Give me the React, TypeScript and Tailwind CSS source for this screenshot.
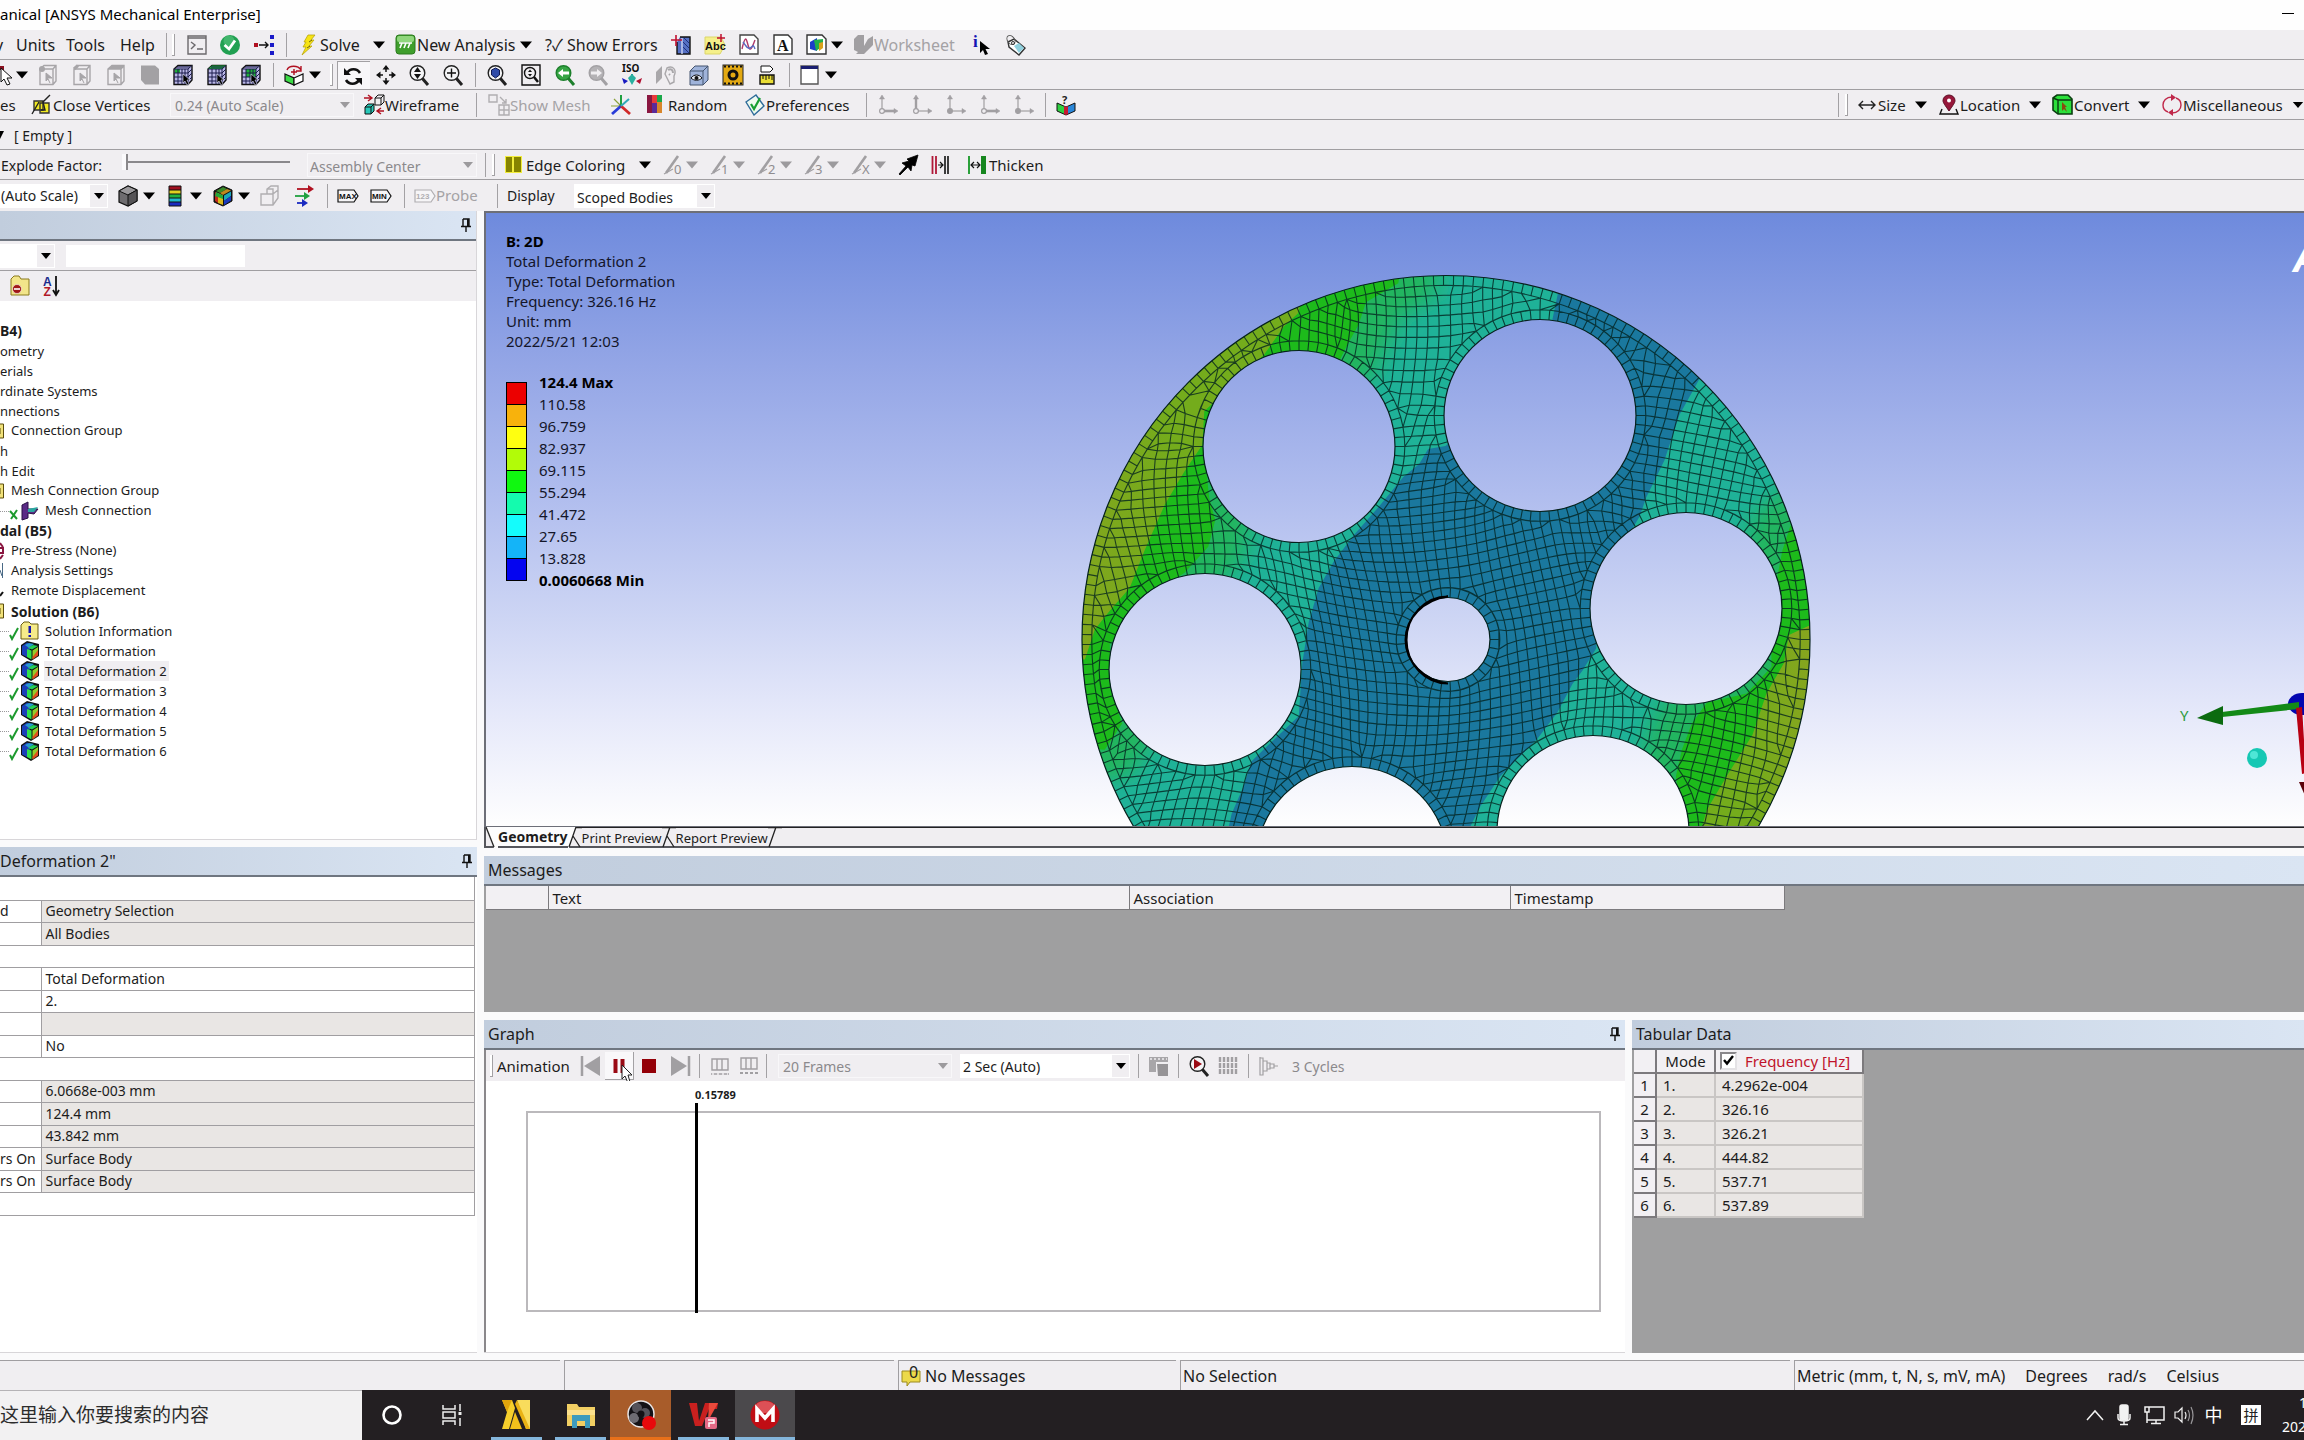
import React, { ReactNode } from "react";

/* ---------- mesh of the perforated wheel ---------- */

type Circle = { x: number; y: number; r: number; out?: boolean };

const RIM: Circle = { x: 1446, y: 640, r: 364, out: true };
const HOLES: Circle[] = [
  { x: 1299, y: 447, r: 96 },
  { x: 1540, y: 416, r: 96 },
  { x: 1686, y: 609, r: 96 },
  { x: 1205, y: 670, r: 96 },
  { x: 1352, y: 863, r: 96 },
  { x: 1593, y: 832, r: 96 },
];
const HUB: Circle = { x: 1448, y: 640, r: 42 };
const CELL = 9.8;

function circlePath(c: Circle) {
  return `M${c.x - c.r} ${c.y}a${c.r} ${c.r} 0 1 0 ${2 * c.r} 0a${c.r} ${c.r} 0 1 0 ${-2 * c.r} 0Z`;
}

function buildMesh() {
  const all = [RIM, ...HOLES, HUB];
  const rings = all.map((c) => {
    const inset = c.out ? c.r - CELL : c.r + CELL;
    return { ...c, inset, n: Math.round((2 * Math.PI * inset) / CELL) };
  });
  const out: string[] = [];
  const p = (n: number) => n.toFixed(1);
  for (const c of rings) {
    out.push(circlePath({ x: c.x, y: c.y, r: c.inset }));
    for (let k = 0; k < c.n; k++) {
      const a = (k / c.n) * 2 * Math.PI;
      out.push(
        `M${p(c.x + c.r * Math.cos(a))} ${p(c.y + c.r * Math.sin(a))}L${p(c.x + c.inset * Math.cos(a))} ${p(c.y + c.inset * Math.sin(a))}`,
      );
    }
  }
  const N = 46;
  const W = 2 * N + 1;
  const xs = new Float64Array(W * W);
  const ys = new Float64Array(W * W);
  const kind = new Int8Array(W * W);
  for (let j = 0; j < W; j++)
    for (let i = 0; i < W; i++) {
      const u = (i - N) * CELL;
      const v = (j - N) * CELL;
      let x = RIM.x + u + 16 * Math.sin(v / 62 + 0.6) + 5 * Math.sin(u / 40);
      let y = RIM.y + v + 16 * Math.sin(u / 66 + 2.2) + 5 * Math.sin(v / 44);
      let best = 1e9;
      let near = rings[0];
      for (const c of rings) {
        const d = Math.hypot(x - c.x, y - c.y);
        const f = c.out ? c.inset - d : d - c.inset;
        if (f < best) {
          best = f;
          near = c;
        }
      }
      const id = j * W + i;
      if (best > CELL * 0.55) kind[id] = 1;
      else if (best > -CELL * 0.65) {
        kind[id] = 2;
        const a = Math.atan2(y - near.y, x - near.x);
        const k = (Math.round((a / (2 * Math.PI)) * near.n) / near.n) * 2 * Math.PI;
        x = near.x + near.inset * Math.cos(k);
        y = near.y + near.inset * Math.sin(k);
      }
      xs[id] = x;
      ys[id] = y;
    }
  for (let t = 0; t < 20; t++)
    for (let id = W; id < W * W - W; id++) {
      if (kind[id] !== 1) continue;
      let sx = 0;
      let sy = 0;
      let n = 0;
      for (const q of [id - 1, id + 1, id - W, id + W])
        if (kind[q]) {
          sx += xs[q];
          sy += ys[q];
          n++;
        }
      if (n) {
        xs[id] = sx / n;
        ys[id] = sy / n;
      }
    }
  for (let id = 0; id < W * W - W; id++)
    for (const q of [id + 1, id + W]) {
      if (!kind[id] || !kind[q]) continue;
      const len = Math.hypot(xs[id] - xs[q], ys[id] - ys[q]);
      if (len > CELL * 2.2 || len < 0.5) continue;
      out.push(`M${p(xs[id])} ${p(ys[id])}L${p(xs[q])} ${p(ys[q])}`);
    }
  return out.join("");
}

const MESH = buildMesh();
const BODY = [RIM, ...HOLES, HUB].map(circlePath).join("");
const GREEN_L =
  "M685 50L680 90L615 140L600 200L575 260L560 300L420 420L290 540L300 660L312 720L298 790L250 860L200 900L100 1050L104 1180L125 1260L90 1330L0 1320L-40 900L0 300L300 100Z";
const GREEN_R =
  "M1500 700L1468 735L1452 800L1430 950L1430 1110L1380 1180L1300 1205L1270 1260L1250 1330L1238 1400L1255 1560L1620 1560L1620 800Z";
const OLIVE_L =
  "M490 120L478 170L450 205L410 280L290 430L286 520L250 590L210 680L170 800L140 900L100 960L70 1010L50 1090L-40 1080L-20 500L300 100Z";
const OLIVE_R = "M1530 985L1465 1025L1455 1100L1420 1180L1392 1290L1340 1400L1300 1490L1285 1560L1640 1560Z";
const BLUE =
  "M1005 90L990 185L960 300L775 522L740 530L722 570L690 605L640 685L590 760L550 830L520 900L500 990L487 1100L480 1240L385 1360L368 1430L345 1500L335 1560L815 1560L845 1480L885 1400L960 1300L1000 1230L1030 1155L1050 1120L1078 1060L1080 900L1165 710L1178 660L1215 560L1245 440L1285 345L1400 250L1100 80Z";

function Wheel() {
  return (
    <svg viewBox="486 212 1818 616" preserveAspectRatio="xMidYMid slice" className="h-full w-full">
      <defs>
        <clipPath id="body">
          <path d={BODY} clipRule="evenodd" />
        </clipPath>
        <filter id="soft" x="-20%" y="-20%" width="140%" height="140%">
          <feGaussianBlur stdDeviation="24" />
        </filter>
        <linearGradient id="edgeL" x1="0" x2="1">
          <stop offset="0.08" stopColor="#84a51e" />
          <stop offset="0.5" stopColor="#74ac1c" />
        </linearGradient>
        <linearGradient id="edgeR" x1="0" x2="1">
          <stop offset="0.3" stopColor="#74ac1c" />
          <stop offset="0.7" stopColor="#8aa41f" />
        </linearGradient>
      </defs>
      <g clipPath="url(#body)">
        <rect x="1070" y="264" width="760" height="760" fill="#1fb298" />
        <g transform="translate(1060 250) scale(.4975 .3762)">
          <g fill="none" stroke="#22b55e" strokeWidth="150" filter="url(#soft)">
            <path d={GREEN_L} />
            <path d={GREEN_R} />
          </g>
          <path d={BLUE} fill="#1a789e" />
          <path d={GREEN_L} fill="#1dbb1b" />
          <path d={GREEN_R} fill="#1dbb1b" />
          <path d={OLIVE_L} fill="url(#edgeL)" />
          <path d={OLIVE_R} fill="url(#edgeR)" />
        </g>
        <path d={MESH} fill="none" stroke="#04231f" strokeOpacity=".8" strokeWidth="1.1" />
      </g>
      <path d={BODY} fill="none" stroke="#06211c" strokeWidth="1.2" />
      <path d="M1448 597A50 44 0 0 0 1448 684A41 43 0 0 1 1448 597Z" fill="#000" stroke="#000" strokeWidth="2" />
    </svg>
  );
}

function Triad() {
  return (
    <svg viewBox="2176 690 128 124" className="absolute right-0 bottom-3.5 h-[124px] w-32">
      <text x="2180" y="723" fontSize="15" fill="#2f9a3c" fontFamily="Noto Sans">
        Y
      </text>
      <ellipse cx="2302" cy="706" rx="14" ry="11" fill="#0306b0" />
      <path d="M2222 714L2299 704L2299 711L2222 719Z" fill="#138a17" />
      <path d="M2197 720L2223 708V727Z" fill="#0b6b10" />
      <path d="M2296 710L2302 709L2306 775L2302 776Z" fill="#b80012" />
      <path d="M2299 784H2306V800Z" fill="#5b0008" />
      <circle cx="2257" cy="760" r="10" fill="#16c8b4" />
      <circle cx="2254" cy="757" r="4" fill="#4fe6d6" />
    </svg>
  );
}

/* ---------- small building blocks ---------- */

function Ic({ children }: { children: ReactNode }) {
  return (
    <svg viewBox="0 0 22 22" className="h-[22px] w-[22px] shrink-0" fill="none" stroke="#111" strokeWidth="1.4">
      {children}
    </svg>
  );
}

function Btn({ w, label, icon, dim, name }: { w: string; label?: string; icon?: ReactNode; dim?: boolean; name?: string }) {
  return (
    <button
      aria-label={label ?? name}
      className={`flex h-full shrink-0 items-center whitespace-nowrap ${w} ${dim ? "text-[#a4a2a5]" : "text-[#1c1c1c]"}`}
    >
      {icon}
      {label}
    </button>
  );
}

function Arrow({ w = "w-3.5", dim }: { w?: string; dim?: boolean }) {
  return (
    <button aria-label="More options" className={`flex h-full shrink-0 items-center ${w}`}>
      <svg viewBox="0 0 14 8" className="h-2 w-3.5">
        <path d="M1 0.5H13L7 7.5Z" fill={dim ? "#9c9a9d" : "#000"} />
      </svg>
    </button>
  );
}

const Sep = ({ w }: { w: string }) => (
  <div className={`flex h-full shrink-0 items-center ${w}`}>
    <div className="h-6 w-px bg-[#a3a1a4]" />
  </div>
);

const Grip = ({ w }: { w: string }) => (
  <div className={`flex h-full shrink-0 items-center ${w}`}>
    <div className="h-[22px] w-[3px] border-r border-b border-[#a3a1a4] bg-white" />
  </div>
);

const Bar = ({ children, size = "text-[15px]" }: { children: ReactNode; size?: string }) => (
  <div className={`flex h-[30px] items-center overflow-hidden border-b border-[#a09ea1] bg-[#f0eef1] pt-px ${size}`}>{children}</div>
);

function Combo({ w, value, dim, name, pad = "pl-1" }: { w: string; value: string; dim?: boolean; name: string; pad?: string }) {
  return (
    <div
      className={`relative flex h-6 shrink-0 items-center border ${w} ${dim ? "border-[#f8f7f9] bg-[#f0eef1]" : "border-white bg-white"}`}
    >
      <select
        aria-label={name}
        disabled={dim}
        className={`h-full w-full appearance-none text-[14px] opacity-100 ${pad} ${dim ? "text-[#8b898c]" : "text-[#1c1c1c]"}`}
      >
        <option>{value}</option>
      </select>
      <div className="pointer-events-none absolute top-0 right-0 flex h-full w-[17px] items-center justify-center bg-[#f0eef1]">
        <svg viewBox="0 0 10 6" className="h-1.5 w-2.5">
          <path d="M0 0H10L5 6Z" fill={dim ? "#9c9a9d" : "#000"} />
        </svg>
      </div>
    </div>
  );
}

const Pin = () => (
  <button aria-label="Pin panel" className="mr-1">
    <svg viewBox="0 0 12 14" className="h-3.5 w-3" fill="none" stroke="#111">
      <path d="M3 1H9V8M3 1V8M1 8.5H11M6 9V14" strokeWidth="1.4" />
      <path d="M8 1V8" strokeWidth="2" />
    </svg>
  </button>
);

function PanelHead({ title, pin, pad = "pl-1" }: { title?: string; pin?: boolean; pad?: string }) {
  return (
    <div className="flex h-[30px] shrink-0 items-center justify-between border-b-2 border-[#6f7680] bg-gradient-to-r from-[#c1cddd] to-[#dae5f3] text-[16px] text-[#1c1c1c]">
      <h2 className={`whitespace-nowrap ${pad}`}>{title}</h2>
      {pin && <Pin />}
    </div>
  );
}

/* ---------- toolbar icons ---------- */

const cubeGrid = (hi: string) => (
  <Ic>
    <path d="M2 5L6 1.5H20V16L16 20.5H2Z" fill="#b9b6e6" stroke="#111" />
    <path d={hi} fill="#1fae3a" stroke="none" />
    <path d="M2 5H16V20.5M16 5L20 1.5M2 9H16M2 13H16M2 17H16M6 5V20M10 5V20M13 5V20M16 9L20 5M16 13L20 9M16 17L20 13M5 3H18" stroke="#1b1b4a" strokeWidth="1" />
    <path d="M11 10V19L13 17L15 21L17 20L15 16H18Z" fill="#000" stroke="#dcdcf5" strokeWidth=".6" />
  </Ic>
);
const cubeDim = (extra: ReactNode) => (
  <Ic>
    <path d="M3 5L7 1.5H19V17L16 20.5H3ZM3 5H16V20.5M16 5L19 1.5" stroke="#a7a5a8" />
    {extra}
    <path d="M9 9V17L11 15L13 19M9 9L15 14H11" stroke="#a7a5a8" fill="#a7a5a8" strokeWidth="1" />
  </Ic>
);
const lens = (inner: ReactNode, ring = "#222", fill = "#f4f4f6") => (
  <Ic>
    <path d="M14 14L20 21" stroke={ring} strokeWidth="3" />
    <circle cx="9.5" cy="9" r="7.3" fill={fill} stroke={ring} />
    {inner}
  </Ic>
);
const axes = (a: boolean, b: boolean, fill: boolean) => (
  <Ic>
    <g stroke="#a19fa2" fill="#a19fa2">
      <path d="M5 17V3" strokeWidth={a ? 2.4 : 1.2} />
      <path d="M5 17H18" strokeWidth={b ? 2.6 : 1.2} />
      <path d="M2.5 5L5 1L7.5 5ZM17 14.5L21 17L17 19.5Z" strokeWidth=".5" />
      <circle cx="5" cy="17" r="2.4" fill={fill ? "#a19fa2" : "#f0eef1"} strokeWidth="1.2" />
    </g>
  </Ic>
);
const edgeIcon = (t: string) => (
  <Ic>
    <path d="M3 19L15 2" stroke="#a19fa2" strokeWidth="2.6" />
    <path d="M1 20L10 15" stroke="#a19fa2" strokeWidth="1.2" />
    <text x="11" y="20" fontSize="13" fill="#8f8d90" stroke="none" fontFamily="Noto Sans">
      {t}
    </text>
  </Ic>
);
const tag = (t: string, c = "#111") => (
  <svg viewBox="0 0 22 16" className="h-4 w-[22px] shrink-0" fill="none" stroke={c}>
    <path d="M1 2H17L21 8L17 14H1Z" strokeWidth="1.2" fill="#f6f5f7" />
    <text x="2" y="11" fontSize="8" fontWeight="700" fill={c} stroke="none" fontFamily="Liberation Sans">
      {t}
    </text>
  </svg>
);
const resultCube = (
  <Ic>
    <path d="M2 5L8 1L20 4V16L12 21L2 15Z" fill="#111" stroke="none" />
    <path d="M3 6L8 2.5L11 4V9L8 17L3 14.5Z" fill="#1b3fb8" stroke="none" />
    <path d="M6 5L10 3L15 4L10 8Z" fill="#2a9ad0" stroke="none" />
    <path d="M8 9L12.500 10.500V19.500L8 17Z" fill="#2fe04a" stroke="none" />
    <path d="M9 8L14 5L19 6L13 9.500Z" fill="#25cf58" stroke="none" />
    <path d="M13.500 10.500L19 7V12L13.500 19Z" fill="#8fce2a" stroke="none" />
    <path d="M19 10V15.500L13.500 19.500V17Z" fill="#e0501c" stroke="none" />
  </Ic>
);
const spectrumCube = (
  <Ic>
    <path d="M2 6L11 1L20 5V16L11 21L2 17Z" fill="#111" stroke="#111" strokeWidth="1" />
    <path d="M3 7L6 8V18L3 16Z" fill="#c02a1c" stroke="none" />
    <path d="M6 8L11 10.500V20L6 18Z" fill="#d8b81c" stroke="none" />
    <path d="M3 11L11 14V10.500L4 7Z" fill="#22a83a" stroke="none" />
    <path d="M4 6L11 2L15 4L8 8Z" fill="#3a8a2a" stroke="none" />
    <path d="M8 8L15 4L19 5.500L11 10Z" fill="#c08a1c" stroke="none" />
    <path d="M12 10.500L19 6.500V11L12 16Z" fill="#1aa8b8" stroke="none" />
    <path d="M12 16L19 11V15.500L12 20Z" fill="#1a3ac0" stroke="none" />
  </Ic>
);

const I = {
  terminal: <Ic><path d="M2 2H20V20H2ZM2 4H20" stroke="#6b696c" /><path d="M5 8L9 11L5 15M11 15H17" stroke="#6b696c" /></Ic>,
  check: <Ic><circle cx="11" cy="11" r="10" fill="#22a052" stroke="none" /><circle cx="10" cy="7" r="5.5" fill="#58c57e" stroke="none" opacity=".6" /><path d="M5.5 11L10 15L16 6.5" stroke="#fff" strokeWidth="2.8" /></Ic>,
  branch: <Ic><path d="M1 9H5V13H1Z" fill="#b01020" stroke="none" /><path d="M6 11H15M12 8L15 11L12 14" /><path d="M17 1H21V5H17ZM17 9H21V13H17ZM17 17H21V21H17Z" fill="#1a1ac8" stroke="none" /></Ic>,
  bolt: <Ic><path d="M10 1H17L13 6H16L11 12H14L4 21L8 13H5L8 8H6Z" fill="#f7e414" stroke="#b9a40c" strokeWidth=".8" /><path d="M14 6L11 8M12 12L9 14" stroke="#6d640c" strokeWidth="1" /></Ic>,
  analysis: <Ic><rect x="1" y="1" width="19" height="19" rx="3" fill="#3f9e2c" stroke="#2c7a1e" strokeWidth="1" /><rect x="2" y="2" width="17" height="6" rx="2" fill="#8fd67c" stroke="none" /><path d="M4 9H17M5 14L7 9M9 14L11 9M13 14L15 9" stroke="#fff" strokeWidth="1.6" /></Ic>,
  section: <Ic><path d="M10 3H20V20H7V8" fill="#5570c4" stroke="#111" /><path d="M12 4V20" stroke="#cdd5f5" /><path d="M13 8L19 14M13 13L19 19M14 4L19 9" stroke="#20307c" strokeWidth="1" /><path d="M1 6H12M6 1V12" stroke="#c01030" strokeWidth="1.6" /></Ic>,
  abc: <Ic><path d="M1 3H17L21 11L16 20H1Z" fill="#f5f08a" stroke="#dcd66a" strokeWidth="1" /><text x="1" y="16" fontSize="11" fontWeight="700" fill="#111" stroke="none" fontFamily="Liberation Sans">Abc</text><path d="M13 4H21M17 0V8" stroke="#c01030" strokeWidth="1.5" /></Ic>,
  chart: <Ic><path d="M2 1H16L20 5V20H2Z" fill="#fff" stroke="#444" /><path d="M4 15C7 2 8 3 10 11S14 14 17 6" stroke="#b03a6a" /><path d="M5 8C8 12 9 15 12 14S15 9 17 15" stroke="#5a6ac0" /></Ic>,
  letter: <Ic><path d="M2 1H16L20 5V20H2Z" fill="#fff" stroke="#333" /><text x="5" y="17" fontSize="16" fontWeight="700" fill="#111" stroke="none" fontFamily="Liberation Serif">A</text></Ic>,
  image: <Ic><path d="M1 1H16L20 5V20H1Z" fill="#fff" stroke="#333" /><path d="M4 8L11 4L11 17L4 15Z" fill="#1d3ec8" stroke="none" /><path d="M8 6L17 5V12L10 17Z" fill="#22b04a" stroke="none" /><path d="M13 9L17 8V14L13 17Z" fill="#d9a01a" stroke="none" /></Ic>,
  sheet: <Ic><path d="M2 5L6 1H12V12L16 5L21 2V11L15 17L12 20H4L6 18L2 16Z" fill="#a19fa2" stroke="none" /></Ic>,
  info: <Ic><text x="1" y="13" fontSize="17" fontWeight="700" fill="#1414b4" stroke="none" fontFamily="Liberation Serif">i</text><path d="M8 7V19L11 16L13 21L16 20L13.500 15H18Z" fill="#000" stroke="none" /></Ic>,
  label: <Ic><path d="M3 8L9 5L20 14L14 21L4 13Z" fill="#fff" stroke="#333" /><path d="M9 12L14 9L19 14L14 19Z" fill="#8fd0de" stroke="none" /><ellipse cx="6" cy="6" rx="3.5" ry="5" transform="rotate(-35 6 6)" stroke="#555" strokeWidth="1" /><circle cx="8" cy="9" r="1.5" stroke="#333" strokeWidth="1" /></Ic>,

  rotate: <Ic><path d="M5 8C8 3 15 3 18 8M17 15C14 20 7 20 4 15" strokeWidth="2.6" /><path d="M2 3V10H9ZM20 20V13H13Z" fill="#111" stroke="none" /></Ic>,
  pan: <Ic><path d="M11 5V8M11 14V17M5 11H8M14 11H17" strokeWidth="1.5" /><path d="M11 1L14.500 5.500H7.500ZM11 21L14.500 16.500H7.500ZM1 11L5.500 7.500V14.500ZM21 11L16.500 7.500V14.500Z" fill="#111" stroke="none" /></Ic>,
  zoomUD: lens(<path d="M9.500 3L13 8H6ZM9.500 15L13 10H6Z" fill="#111" stroke="none" />),
  zoomIn: lens(<path d="M5 9H14M9.500 4.500V13.500" />),
  zoomCube: lens(<path d="M5.500 6L9.500 4L13.500 6V11L9.500 14L5.500 11Z" fill="#2e4aa8" stroke="#101a50" strokeWidth="1" />),
  zoomBox: <Ic><path d="M2 1H20V21H2Z" /><circle cx="10" cy="9" r="5.5" /><path d="M14 13L18 18" strokeWidth="2.5" /><path d="M10 5.500L12 8H8ZM10 12.500L12 10H8Z" fill="#111" stroke="none" /></Ic>,
  zoomPrev: lens(<path d="M4 9L9 5V7.500H15V10.500H9V13Z" fill="#fff" stroke="none" />, "#1d7f2c", "#36a544"),
  zoomNext: lens(<path d="M15 9L10 5V7.500H4V10.500H10V13Z" fill="#f0eef1" stroke="none" />, "#a3a1a4", "#b4b2b5"),
  iso: <Ic><text x="1" y="8" fontSize="10" fontWeight="700" fill="#111" stroke="none" fontFamily="Noto Sans">ISO</text><path d="M11 10V15" stroke="#1a9a9a" strokeWidth="2" /><path d="M7 14L11 10L15 14L11 21Z" fill="#28b0a0" stroke="none" /><path d="M1 14L7 17L3 20Z" fill="#1a1ac0" stroke="none" /><path d="M21 14L15 17L19 20Z" fill="#b01030" stroke="none" /></Ic>,
  heads: <Ic><path d="M1 8L7 2V14L1 20Z" fill="#a9a7aa" stroke="none" /><path d="M12 4C18 1 22 6 19 12V18L15 20L12 14L10 10Z" stroke="#a9a7aa" /><path d="M13 6C16 4 18 6 18 9M14 10L15 11" stroke="#a9a7aa" strokeWidth="2" /></Ic>,
  eyeCube: <Ic><path d="M2 7L7 2H20V16L15 21H2Z" fill="#9fb3da" stroke="#44546e" strokeWidth="1" /><path d="M2 7H15V21M15 7L20 2" stroke="#44546e" strokeWidth="1" /><path d="M3 14C6 10 11 10 14 14C11 17 6 17 3 14Z" fill="#e7edf8" stroke="#111" strokeWidth="1" /><circle cx="8.5" cy="14" r="2" fill="#111" stroke="none" /></Ic>,
  gearFilm: <Ic><rect x="1" y="1" width="20" height="20" fill="#e3a912" stroke="#222" strokeWidth="1" /><path d="M2 2.500H20M2 19.500H20" strokeDasharray="2 2" strokeWidth="2" /><circle cx="11" cy="11" r="4" stroke="#111" strokeWidth="3" /></Ic>,
  ruler: <Ic><path d="M5 2H14L17 5L14 8H5Z" fill="#fff" strokeWidth="1" /><path d="M4 11H18V20H4Z" fill="#e9dd35" /><path d="M7 11V15M10 11V16M13 11V15M16 11V16" strokeWidth="1" /></Ic>,
  win: <Ic><path d="M2 2H19V20H2Z" fill="#fff" stroke="#555" /><path d="M2 3.500H19" stroke="#1b1f70" strokeWidth="3" /></Ic>,
  planeCube: <Ic><path d="M2 10L11 14V21L2 17Z" fill="#3bdb45" stroke="#111" strokeWidth="1.2" /><path d="M11 14L20 10V17L11 21Z" fill="#fff" stroke="#111" strokeWidth="1.2" /><path d="M4 6C6 1 15 1 18 6M18 2V7H13" stroke="#b01020" /><path d="M11 5V11M8 8H14" stroke="#b01020" /></Ic>,
  cursor: <svg viewBox="0 0 14 22" className="h-[22px] w-3.5 shrink-0"><path d="M0 2H4V6H0Z" fill="#8a0f1f" /><path d="M1 4V18L4 15L7 21L10 20L7 14H12Z" fill="#fff" stroke="#111" /></svg>,

  vertices: <Ic><path d="M3 7H12V16H3ZM9 9H18V19H9Z" fill="#f1ea22" stroke="#333" /><path d="M1 20L8 8M10 16H14L12 8L19 1" stroke="#222" /></Ic>,
  wire: <Ic><path d="M1 4H8M5 1L9 4L5 7" stroke="#b01020" /><path d="M12 4L15 1H21V8L18 11H12ZM12 4H18V11M18 4L21 1" strokeWidth="1" /><path d="M2 13L5 10H11V17L8 20H2Z" fill="#27c8b8" strokeWidth="1" /><path d="M2 13H8V20M8 13L11 10" strokeWidth="1" /><path d="M21 17H15M18 14L14 17L18 20" stroke="#b01020" /></Ic>,
  showMesh: <Ic><path d="M1 1H9V8H1ZM12 3L18 9M18 5V9H14M11 11H21V21H11ZM11 16H21M16 11V21" stroke="#b0aeb1" /></Ic>,
  star: <Ic><path d="M11 12L4 5M11 12H1" stroke="#8aa03a" strokeWidth="1.2" /><path d="M11 12V1" stroke="#20a040" strokeWidth="2" /><path d="M11 12L2 20" stroke="#2a3cd8" strokeWidth="2.8" /><path d="M11 12L20 20" stroke="#d02828" strokeWidth="2.8" /><path d="M11 12L19 5" stroke="#30a8b8" strokeWidth="2" /></Ic>,
  random: <Ic><path d="M1 1H6V19H1Z" fill="#8a1640" stroke="none" /><path d="M6 1H11V9H6Z" fill="#e83a3a" stroke="none" /><path d="M11 1H16V8H11Z" fill="#1aa84a" stroke="none" /><path d="M6 9H11V19H6Z" fill="#5a2a9a" stroke="none" /><path d="M11 8H16V19H11Z" fill="#d9862a" stroke="none" /></Ic>,
  prefs: <Ic><path d="M2 8L12 1L20 12L10 21Z" fill="#eefaf0" stroke="#2e6c9a" /><path d="M7 10L10 15L16 4" stroke="#16a032" strokeWidth="2.2" /></Ic>,
  help: <Ic><path d="M2 9L11 13V21L2 17Z" fill="#2ed040" strokeWidth="1" /><path d="M20 9L11 13V21L20 17Z" fill="#2a86d8" strokeWidth="1" /><path d="M9 12L11 13L13 12V20L11 21L9 20Z" fill="#c81830" stroke="none" /><text x="7" y="10" fontSize="11" fontWeight="700" fill="#222" stroke="none" fontFamily="Noto Sans">?</text></Ic>,
  size: <Ic><path d="M3 11H19M7 7L3 11L7 15M15 7L19 11L15 15" stroke="#222" /></Ic>,
  loc: <Ic><path d="M11 17C7 11 5 9 5 6.500A6 5.500 0 0 1 17 6.500C17 9 15 11 11 17Z" fill="#96163a" stroke="#5a0c22" strokeWidth="1" /><circle cx="11" cy="6.500" r="2" fill="#fff" stroke="none" /><path d="M4 15L2 20H20L18 15" /></Ic>,
  convert: <Ic><path d="M1 4L5 1H16L20 5V20H6L1 16Z" fill="#2be03a" stroke="#0b3d10" strokeWidth="1.6" /><path d="M6 6H20M6 6V20M1 4L6 6" stroke="#0b3d10" /><path d="M10 8V17L12 15L15 18L13 13H15Z" fill="#8a4a10" stroke="none" /></Ic>,
  misc: <Ic><path d="M11 3C5 3 2 7 2 11S4 17 7 18M11 19C17 19 20 15 20 11S18 5 15 4" stroke="#c0284a" /><path d="M10 0V7L15 3.500ZM12 15V22L7 18.500Z" fill="#c0284a" stroke="none" /></Ic>,

  edgeColor: <svg viewBox="0 0 22 22" className="h-[22px] w-[22px] shrink-0"><path d="M1 2H18V19H1Z" fill="#f1ec3c" /><path d="M2 3H8V18H2ZM10 3H17V18H10Z" fill="#868400" /></svg>,
  pinArrow: <Ic><path d="M20 1L17 12L14 11L13 17L10 13L2 21L1 20L8 12L4 9L11 7L9 5Z" fill="#000" stroke="#000" strokeWidth=".8" /></Ic>,
  parallel: <Ic><path d="M2.500 2V20M6 2V20" stroke="#b01838" strokeWidth="1.8" /><path d="M15 2V20M18 2V20" strokeWidth="1.6" /><path d="M8 11H13M10 8L13 11L10 14" strokeWidth="1.2" /></Ic>,
  thicken: <Ic><path d="M2 2V20" stroke="#2ba03a" strokeWidth="2" /><path d="M4 11H13M7 8L4 11L7 14M10 8L13 11L10 14" strokeWidth="1.2" /><path d="M14 2H19V20H14Z" fill="#17861f" stroke="none" /></Ic>,

  grayCube: <Ic><path d="M2 6L11 1L20 5V16L11 21L2 17Z" fill="#6e6c6f" strokeWidth="1.2" /><path d="M2 6L11 1L20 5L11 10Z" fill="#9a989b" strokeWidth="1" /><path d="M11 10L20 5V16L11 21Z" fill="#555356" strokeWidth="1" /></Ic>,
  legend: <Ic><path d="M5 1H17V5H5Z" fill="#a01020" stroke="none" /><path d="M5 5H17V9H5Z" fill="#e0d020" stroke="none" /><path d="M5 9H17V13H5Z" fill="#20b040" stroke="none" /><path d="M5 13H17V17H5Z" fill="#20b8d0" stroke="none" /><path d="M5 17H17V21H5Z" fill="#1a2ac0" stroke="none" /><path d="M5 1H17V21H5ZM5 5H17M5 9H17M5 13H17M5 17H17" strokeWidth="1" /></Ic>,
  ghost: <Ic><path d="M2 9H8V4L12 1H19V13L14 20H2ZM8 9H14V20M14 9L19 5M8 4H14V9" stroke="#b0aeb1" /></Ic>,
  flows: <Ic><path d="M4 4H16" stroke="#b01020" strokeWidth="1.8" /><path d="M15 0L21 4L15 8Z" fill="#b01020" stroke="none" /><path d="M2 11H12" stroke="#20a040" strokeWidth="1.8" /><path d="M11 7L17 11L11 15Z" fill="#20a040" stroke="none" /><path d="M4 18H10" stroke="#1a2ac0" strokeWidth="1.8" /><path d="M9 14L15 18L9 22Z" fill="#1a2ac0" stroke="none" /></Ic>,
  folderNo: <Ic><path d="M2 4L5 1H10L12 4H20V20H2Z" fill="#f2e58a" stroke="#8a7a1c" strokeWidth="1" /><circle cx="8" cy="14" r="4.5" fill="#a01818" stroke="#fff" strokeWidth=".6" /><path d="M5 14H11" stroke="#fff" strokeWidth="1.6" /></Ic>,
  az: <Ic><text x="1" y="11" fontSize="12" fontWeight="700" fill="#1b2b8c" stroke="none" fontFamily="Liberation Sans">A</text><text x="1.5" y="21" fontSize="12" fontWeight="700" fill="#b01828" stroke="none" fontFamily="Liberation Sans">Z</text><path d="M14 1V18M11 15L14 20L17 15" strokeWidth="1.8" /></Ic>,

  first: <Ic><path d="M2 1V21" stroke="#a19fa2" strokeWidth="2.5" /><path d="M20 1V21L4 11Z" fill="#a19fa2" stroke="none" /></Ic>,
  last: <Ic><path d="M20 1V21" stroke="#a19fa2" strokeWidth="2.5" /><path d="M2 1V21L18 11Z" fill="#a19fa2" stroke="none" /></Ic>,
  pause: <Ic><path d="M5.500 4H9.500V18H5.500ZM12.500 4H16.500V18H12.500Z" fill="#9a0a14" stroke="none" /></Ic>,
  stop: <Ic><path d="M4 4H18V18H4Z" fill="#940008" stroke="none" /></Ic>,
  frames: <Ic><path d="M3 4H19V15H3ZM8 4V15M13 4V15M2 19H20" stroke="#a19fa2" /><path d="M3 19H19" stroke="#f0eef1" strokeDasharray="2 3" /></Ic>,
  frames2: <Ic><path d="M3 3H19V14H3ZM8 3V14M13 3V14" stroke="#a19fa2" /><path d="M2 18H20" stroke="#a19fa2" strokeDasharray="3 2" strokeWidth="2" /></Ic>,
  exportV: <Ic><path d="M1 2H20V7H8V17H1Z" fill="#a8a6a9" stroke="none" /><path d="M9 9H20V21H10Z" fill="#969497" stroke="none" /><path d="M2 4H19" stroke="#f0eef1" strokeDasharray="2 2" /></Ic>,
  zoomPlay: lens(<path d="M6 4L14 9L6 14Z" fill="#9a0a14" stroke="none" />),
  tableDots: <Ic><path d="M2 2V20M6 2V20M10 2V20M14 2V20M18 2V20" stroke="#a19fa2" strokeWidth="2.4" strokeDasharray="5 1" /></Ic>,
  cycles: <Ic><path d="M2 2V20H5V3H2M5 16H9V6H5M9 14H12V8H9M12 13H16V9H12M16 11H20" stroke="#a19fa2" strokeWidth="1.2" /></Ic>,
};

/* ---------- data ---------- */

const TREE_TOP = ["B4)", "ometry", "erials", "rdinate Systems", "nnections"];
const LEGEND = [
  ["124.4 Max", "bg-[#ec0000]"],
  ["110.58", "bg-[#f8b20c]"],
  ["96.759", "bg-[#ffff10]"],
  ["82.937", "bg-[#b2fb08]"],
  ["69.115", "bg-[#10f810]"],
  ["55.294", "bg-[#14fbae]"],
  ["41.472", "bg-[#14fcfc]"],
  ["27.65", "bg-[#14b4f8]"],
  ["13.828", "bg-[#0404f0]"],
  ["0.0060668 Min", ""],
];
const DETAILS: ([string, string, boolean] | null)[] = [
  null,
  ["d", "Geometry Selection", true],
  ["", "All Bodies", true],
  null,
  ["", "Total Deformation", false],
  ["", "2.", false],
  ["", "", true],
  ["", "No", false],
  null,
  ["", "6.0668e-003 mm", true],
  ["", "124.4 mm", true],
  ["", "43.842 mm", true],
  ["rs On", "Surface Body", true],
  ["rs On", "Surface Body", true],
  null,
];
const MODES = ["4.2962e-004", "326.16", "326.21", "444.82", "537.71", "537.89"];

/* ---------- left side ---------- */

const Tick = () => (
  <svg viewBox="0 0 10 16" className="h-4 w-2.5 shrink-0 self-end" fill="none" stroke="#1d9a2e" strokeWidth="2">
    <path d="M1 10L3 14L9 3" />
  </svg>
);

function Leaf({ text, icon, on }: { text: string; icon: ReactNode; on?: boolean }) {
  return (
    <li className="flex h-5 items-center">
      <span className="w-[9px] border-t border-dotted border-[#9a989b]" />
      <Tick />
      {icon}
      <span className={`ml-[3px] pr-0.5 pl-px leading-5 ${on ? "bg-[#f0eef1]" : ""}`}>{text}</span>
    </li>
  );
}

function Node({ text, bold, icon }: { text: string; bold?: boolean; icon: ReactNode }) {
  return (
    <li className={`flex h-5 items-center gap-[7px] ${bold ? "text-[14px] font-bold" : ""}`}>
      <svg viewBox="0 0 4 18" className="h-[18px] w-1 shrink-0" fill="none">
        {icon}
      </svg>
      {text}
    </li>
  );
}

const groupMark = <path d="M-8 2H3.500V16H-8M0 6V12H-4V6Z" fill="#f1e27a" stroke="#5b4c0c" />;

function Outline() {
  return (
    <section className="flex min-h-0 flex-1 flex-col border-r border-b border-[#d8d6d9] bg-white">
      <PanelHead pin />
      <div className="flex h-[30px] shrink-0 items-center border-b border-[#a09ea1] bg-[#f0eef1]">
        <Combo w="w-[55px]" value=" " name="Filter field" />
        <input aria-label="Filter text" className="ml-[11px] h-[22px] w-[179px] bg-white text-[14px] outline-none" />
      </div>
      <div className="flex h-[30px] shrink-0 items-center bg-[#f0eef1] pl-[9px]">
        <Btn w="w-[33px]" name="Hide folders" icon={I.folderNo} />
        <Btn w="w-[33px]" name="Sort" icon={I.az} />
      </div>
      <ul className="overflow-hidden pt-5 text-[13px] whitespace-nowrap text-[#1c1c1c]">
        {TREE_TOP.map((t, i) => (
          <li key={t} className={`h-5 leading-5 ${i === 0 ? "text-[14px] font-bold" : ""}`}>
            {t}
          </li>
        ))}
        <Node text="Connection Group" icon={groupMark} />
        <li className="h-5 leading-5">h</li>
        <li className="h-5 leading-5">h Edit</li>
        <Node text="Mesh Connection Group" icon={groupMark} />
        <li className="flex h-5 items-center">
          <span className="w-[9px] border-t border-dotted border-[#9a989b]" />
          <svg viewBox="0 0 32 20" className="h-5 w-8 shrink-0" fill="none">
            <path d="M1 10L8 18M8 9L2 18" stroke="#1d9a2e" strokeWidth="2" />
            <path d="M13 4L19 1V8H29L25 13L19 12V17L13 19Z" fill="#5b2a86" stroke="#2b1145" />
            <path d="M19 8L29 6L25 11H19Z" fill="#2aa7a0" />
          </svg>
          <span className="ml-1">Mesh Connection</span>
        </li>
        <li className="h-5 text-[14px] leading-5 font-bold">dal (B5)</li>
        <Node text="Pre-Stress (None)" icon={<path d="M0 1L3 5M0 6H3V11H0M0 17L3 13" stroke="#8a1640" strokeWidth="2" />} />
        <Node text="Analysis Settings" icon={<path d="M2.500 1V16M0 8L2 14" stroke="#4a6a86" />} />
        <Node text="Remote Displacement" icon={<path d="M0 14L3 10" stroke="#111" strokeWidth="2" />} />
        <Node text="Solution (B6)" bold icon={groupMark} />
        <Leaf
          text="Solution Information"
          icon={
            <svg viewBox="0 0 22 20" className="h-5 w-[22px] shrink-0">
              <path d="M2 4L5 1H10L12 3H19V18H2Z" fill="#f6eb8a" stroke="#6b5c10" />
              <path d="M9.500 5H12V12H9.500ZM9.500 14H12V16H9.500Z" fill="#1616b0" />
            </svg>
          }
        />
        {["", " 2", " 3", " 4", " 5", " 6"].map((n) => (
          <Leaf key={n} text={`Total Deformation${n}`} on={n === " 2"} icon={resultCube} />
        ))}
      </ul>
    </section>
  );
}

function Details() {
  return (
    <section className="flex h-[506px] shrink-0 flex-col border-b border-[#d8d6d9] bg-white">
      <PanelHead title={'Deformation 2"'} pin pad="pl-0" />
      <table className="mr-0.5 table-fixed border-collapse text-[14px] leading-4 text-[#1c1c1c]">
        <colgroup>
          <col className="w-[41px]" />
          <col />
        </colgroup>
        <tbody>
          {DETAILS.map((r, i) => (
            <tr key={i} className={i % 2 ? "h-[22px]" : "h-[23px]"}>
              {r ? (
                <>
                  <td className="border-r border-b border-[#a09ea1] p-0 whitespace-nowrap">{r[0]}</td>
                  <td className={`border-r border-b border-[#a09ea1] py-0 pl-1 ${r[2] ? "bg-[#e9e6e4]" : ""}`}>{r[1]}</td>
                </>
              ) : (
                <td colSpan={2} className="border-r border-b border-[#a09ea1] p-0" />
              )}
            </tr>
          ))}
        </tbody>
      </table>
    </section>
  );
}

/* ---------- right side ---------- */

function Viewport() {
  return (
    <section className="relative min-h-0 flex-1 overflow-hidden border-t-2 border-b border-l-2 border-[#6d6f78] bg-[linear-gradient(#6e8add,#94a6e6_25%,#b0bdee_46%,#cdd5f4_66%,#e6e9fa_82%,#fefefe)] font-['Noto_Sans']">
      <div className="absolute inset-0">
        <Wheel />
      </div>
      <div className="relative pt-[18px] pl-5 text-[15px] leading-5 text-[#14162a]">
        <p className="font-bold text-black">B: 2D</p>
        <p>Total Deformation 2</p>
        <p>Type: Total Deformation</p>
        <p>Frequency: 326.16 Hz</p>
        <p>Unit: mm</p>
        <p>2022/5/21 12:03</p>
      </div>
      <ul className="relative mt-5 ml-5 w-60 text-[15px] text-[#14162a]">
        {LEGEND.map(([t, c], i) => (
          <li key={t} className="flex h-[22px]">
            <span className={`h-[23px] w-[21px] shrink-0 ${c ? `border border-black ${c} translate-y-[11px]` : ""}`} />
            <span className={`ml-3 leading-[22px] ${i === 0 || i === 9 ? "font-bold text-black" : ""}`}>{t}</span>
          </li>
        ))}
      </ul>
      <span className="absolute top-6 left-full -ml-2.5 text-[40px] leading-10 font-bold text-white italic">A</span>
      <Triad />
    </section>
  );
}

const Slant = ({ d, fill }: { d: string; fill?: string }) => (
  <svg viewBox="0 0 14 21" className="h-[21px] w-3.5 shrink-0" fill="none" stroke="#222" strokeWidth="1.3">
    {fill && <path d={fill} fill="#fdfdfd" stroke="none" />}
    <path d={d} />
  </svg>
);

function Tabs() {
  return (
    <nav className="flex h-[21px] shrink-0 border-b-2 border-l-2 border-[#55565c] bg-[#f0eef1] text-[13px] leading-5 whitespace-nowrap text-[#1c1c1c]">
      <svg viewBox="0 0 12 21" className="h-[21px] w-3 shrink-0" stroke="#222" strokeWidth="1.3">
        <path d="M0 0H12V21H8Z" fill="#fdfdfd" stroke="none" />
        <path d="M0 0L8 20" />
      </svg>
      <button className="bg-[#fdfdfd] text-[14px] font-bold">Geometry</button>
      <Slant d="M1 20L8 0M5 9L12 20M8 0.500H14" fill="M0 0H8L1 21H0Z" />
      <button className="border-t border-[#222]">Print Preview</button>
      <Slant d="M0 .5H8M1 20L8 0M5 9L12 20M8 0.500H14" />
      <button className="border-t border-[#222]">Report Preview</button>
      <Slant d="M0 .5H8M1 20L8 0M8 .5H14" />
      <div className="flex-1 border-t border-[#222]" />
    </nav>
  );
}

function Messages() {
  const th = "border-r border-b border-[#7c7a7d] pl-1 text-left font-normal";
  return (
    <section className="mt-2 flex h-[156px] shrink-0 flex-col bg-[#9f9fa0]">
      <PanelHead title="Messages" />
      <table className="ml-0.5 h-6 w-[1299px] table-fixed border-collapse bg-[#f2f0f3] text-[15px] leading-5 text-[#1c1c1c]">
        <thead>
          <tr>
            <th className={`w-[62px] ${th}`} />
            <th className={`w-[581px] ${th}`}>Text</th>
            <th className={`w-[381px] ${th}`}>Association</th>
            <th className={th}>Timestamp</th>
          </tr>
        </thead>
      </table>
    </section>
  );
}

function Graph() {
  return (
    <section className="flex min-w-0 flex-1 flex-col border-b border-[#d8d6d9] bg-white">
      <PanelHead title="Graph" pin />
      <div className="flex h-[31px] shrink-0 items-center overflow-hidden border-l-2 border-[#8a888b] bg-[#f0eef1] pt-px pl-1 text-[15px]">
        <Grip w="w-[7px]" />
        <Btn w="w-[83px]" label="Animation" />
        <Btn w="w-[25px]" name="First frame" icon={I.first} />
        <button aria-label="Pause" className="relative flex h-7 w-[29px] items-center justify-center border-r border-b border-[#a3a1a4] bg-[#f9f8fa]">
          {I.pause}
          <svg viewBox="0 0 12 20" className="absolute top-3 left-4 z-10 h-5 w-3">
            <path d="M1 1V15L4 12L7 19L9 18L7 11H11Z" fill="#fff" stroke="#222" />
          </svg>
        </button>
        <Btn w="w-[35px] pl-1" name="Stop" icon={I.stop} />
        <Btn w="w-[30px]" name="Last frame" icon={I.last} />
        <Sep w="w-2.5" />
        <Btn w="w-[29px]" name="Distributed frames" icon={I.frames} />
        <Btn w="w-7" name="Result sets" icon={I.frames2} />
        <Sep w="w-3" />
        <Combo w="w-[174px]" value="20 Frames" dim name="Frames" />
        <span className="w-2" />
        <Combo w="w-[170px]" value="2 Sec (Auto)" name="Duration" pad="pl-0.5" />
        <span className="w-2" />
        <Sep w="w-2.5" />
        <Btn w="w-[30px]" name="Export video" icon={I.exportV} />
        <Sep w="w-2.5" />
        <Btn w="w-[30px]" name="Zoom to fit" icon={I.zoomPlay} />
        <Btn w="w-[30px]" name="Table" icon={I.tableDots} />
        <Sep w="w-2.5" />
        <Btn w="w-[34px]" name="Cycles" icon={I.cycles} />
        <span className="text-[14px] text-[#8b898c]">3 Cycles</span>
      </div>
      <div className="relative flex-1 border-l-2 border-[#8a888b] pt-[30px] pr-6 pb-10 pl-10">
        <div className="h-full border-2 border-[#bbb9bc]" />
        <div className="absolute top-[22px] bottom-[39px] left-[209px] w-[3px] bg-black" />
        <span className="absolute top-1.5 left-[209px] text-[11px] leading-4 font-bold text-[#1c1c1c]">0.15789</span>
      </div>
    </section>
  );
}

function Tabular() {
  const head = "border-r-2 border-b-2 border-[#7c7a7d] bg-[#f2f0f3] p-0 font-normal";
  const cell = "border-r-2 border-b-2 border-[#c9c6c4] bg-[#e9e6e4] p-0 pl-1.5";
  return (
    <section className="flex min-w-0 flex-col bg-[#9f9fa0]">
      <PanelHead title="Tabular Data" />
      <table className="ml-0.5 w-[230px] table-fixed border-separate border-spacing-0 text-[15px] leading-5 text-[#1c1c1c]">
        <thead>
          <tr className="h-6">
            <th className={`w-[23px] ${head}`} />
            <th className={`w-[59px] ${head}`}>Mode</th>
            <th className={head}>
              <label className="flex items-center gap-2 pl-1 text-[#c0142c]">
                <span className="relative flex h-[18px] w-[17px] border-2 border-[#8a888b] border-r-[#e4e2e5] border-b-[#e4e2e5] bg-white">
                  <input type="checkbox" defaultChecked className="peer h-full w-full appearance-none" />
                  <svg viewBox="0 0 12 12" className="pointer-events-none absolute inset-0 hidden h-3 w-3 peer-checked:block" fill="none" stroke="#000" strokeWidth="2.4">
                    <path d="M2 6L5 9.500L11 2" />
                  </svg>
                </span>
                Frequency [Hz]
              </label>
            </th>
          </tr>
        </thead>
        <tbody>
          {MODES.map((m, i) => (
            <tr key={m} className="h-6">
              <td className={`${head} text-center`}>{i + 1}</td>
              <td className={cell}>{i + 1}.</td>
              <td className={cell}>{m}</td>
            </tr>
          ))}
        </tbody>
      </table>
    </section>
  );
}

/* ---------- bars at top and bottom ---------- */

function Toolbars() {
  return (
    <header>
      <div className="flex h-[30px] items-start justify-between bg-[#fefefe] text-[15px] text-black">
        <h1 className="pt-0.5 leading-6 whitespace-nowrap">anical [ANSYS Mechanical Enterprise]</h1>
        <button aria-label="Minimize" className="flex h-[27px] w-[29px] items-center pl-[7px]">
          <span className="h-px w-3 bg-black" />
        </button>
      </div>
      <Bar size="text-[16px]">
        <Btn w="-ml-[5px] mr-[5px] w-4" label="v" />
        <Btn w="w-[50px]" label="Units" />
        <Btn w="w-[54px]" label="Tools" />
        <Btn w="w-[46px]" label="Help" />
        <Sep w="w-1.5" />
        <Grip w="w-3.5" />
        <Btn w="w-[33px]" name="Command window" icon={I.terminal} />
        <Btn w="w-[34px]" name="Validate" icon={I.check} />
        <Btn w="w-[33px]" name="Tree" icon={I.branch} />
        <Sep w="w-3" />
        <Btn w="w-[74px]" label="Solve" icon={I.bolt} />
        <Arrow w="w-[23px]" />
        <Btn w="w-[124px]" label="New Analysis" icon={I.analysis} />
        <Arrow w="w-[26px]" />
        <Btn w="w-[125px]" label="?✓ Show Errors" />
        <Btn w="w-[34px]" name="Section plane" icon={I.section} />
        <Btn w="w-[34px]" name="Annotation" icon={I.abc} />
        <Btn w="w-[34px]" name="Chart" icon={I.chart} />
        <Btn w="w-[34px]" name="Comment" icon={I.letter} />
        <Btn w="w-6" name="Image" icon={I.image} />
        <Arrow w="w-[22px]" />
        <Btn w="w-[120px]" label="Worksheet" icon={I.sheet} dim />
        <Btn w="w-[33px]" name="Selection information" icon={I.info} />
        <Btn w="w-[34px]" name="Tags" icon={I.label} />
      </Bar>
      <Bar>
        <Btn w="w-[15px]" name="Select" icon={I.cursor} />
        <Arrow w="w-[22px]" />
        <Btn w="w-[34px]" name="Vertex" icon={cubeDim(<circle cx="5" cy="5" r="3" fill="#a7a5a8" stroke="none" />)} />
        <Btn w="w-[34px]" name="Edge" icon={cubeDim(<path d="M3 5L7 1.500" stroke="#a7a5a8" strokeWidth="3" />)} />
        <Btn w="w-[34px]" name="Face" icon={cubeDim(<path d="M3 5L7 1.500H19L16 5Z" fill="#a7a5a8" stroke="none" />)} />
        <Btn w="w-[33px]" name="Body" icon={<Ic><path d="M2 1.500H16L20 5V20.500H6L2 16Z" fill="#a3a1a4" stroke="none" /></Ic>} />
        <Btn w="w-[34px]" name="Node" icon={cubeGrid("M3 5H8V9H3Z")} />
        <Btn w="w-[34px]" name="Element face" icon={cubeGrid("M2 5L6 1.5H20L16 5Z")} />
        <Btn w="w-[33px]" name="Element" icon={cubeGrid("M6 5H16V13H6Z")} />
        <Sep w="w-2.5" />
        <Btn w="w-[25px]" name="Coordinate plane" icon={I.planeCube} />
        <Arrow w="w-[22px]" />
        <Grip w="w-[7px]" />
        <button aria-label="Rotate" className="flex h-7 w-[33px] shrink-0 items-center border-t border-l border-[#a3a1a4] bg-[#f8f7f9] pl-1">
          {I.rotate}
        </button>
        <span className="w-[5px]" />
        <Btn w="w-[33px]" name="Pan" icon={I.pan} />
        <Btn w="w-[34px]" name="Zoom" icon={I.zoomUD} />
        <Btn w="w-[33px]" name="Box zoom" icon={I.zoomIn} />
        <Sep w="w-[11px]" />
        <Btn w="w-[34px]" name="Fit" icon={I.zoomCube} />
        <Btn w="w-[34px]" name="Magnifier" icon={I.zoomBox} />
        <Btn w="w-[33px]" name="Previous view" icon={I.zoomPrev} />
        <Btn w="w-[34px]" name="Next view" icon={I.zoomNext} />
        <Btn w="w-[34px]" name="Isometric view" icon={I.iso} />
        <Btn w="w-[33px]" name="Look at" icon={I.heads} />
        <Btn w="w-[34px]" name="Manage views" icon={I.eyeCube} />
        <Btn w="w-[34px]" name="Rescale" icon={I.gearFilm} />
        <Btn w="w-[33px]" name="Ruler" icon={I.ruler} />
        <Sep w="w-2.5" />
        <Btn w="w-[25px]" name="Viewports" icon={I.win} />
        <Arrow />
      </Bar>
      <Bar>
        <Btn w="w-[31px]" label="es" />
        <Btn w="w-[139px]" label="Close Vertices" icon={I.vertices} />
        <Combo w="w-[184px]" value="0.24 (Auto Scale)" dim name="Vertex scale" />
        <span className="w-[9px]" />
        <Btn w="w-[113px]" label="Wireframe" icon={I.wire} />
        <Sep w="w-3" />
        <Btn w="w-[122px]" label="Show Mesh" icon={I.showMesh} dim />
        <Btn w="w-9" name="Coordinate systems" icon={I.star} />
        <Btn w="w-[98px]" label="Random" icon={I.random} />
        <Btn w="w-[122px]" label="Preferences" icon={I.prefs} />
        <Sep w="w-[11px]" />
        <Btn w="w-[34px]" name="Axis 1" icon={axes(false, true, false)} />
        <Btn w="w-[34px]" name="Axis 2" icon={axes(true, false, false)} />
        <Btn w="w-[34px]" name="Axis 3" icon={axes(false, false, true)} />
        <Btn w="w-[34px]" name="Axis 4" icon={axes(false, true, false)} />
        <Btn w="w-8" name="Axis 5" icon={axes(false, false, true)} />
        <Sep w="w-2.5" />
        <Btn w="w-[34px]" name="Help" icon={I.help} />
        <span className="flex-1" />
        <Sep w="w-[7px]" />
        <Grip w="w-[11px]" />
        <Btn w="w-[58px]" label="Size" icon={I.size} />
        <Arrow w="w-6" />
        <Btn w="w-[90px]" label="Location" icon={I.loc} />
        <Arrow w="w-6" />
        <Btn w="w-[85px]" label="Convert" icon={I.convert} />
        <Arrow w="w-6" />
        <Btn w="w-[131px]" label="Miscellaneous" icon={I.misc} />
        <Arrow w="w-3" />
      </Bar>
      <Bar size="text-[14px]">
        <svg viewBox="0 0 4 8" className="mr-2.5 h-2 w-1 shrink-0">
          <path d="M-4 0H4L0 8Z" />
        </svg>
        <span className="whitespace-nowrap text-[#1c1c1c]">[ Empty ]</span>
      </Bar>
      <Bar>
        <label htmlFor="explode" className="w-[122px] shrink-0 pl-px text-[14px] text-[#1c1c1c]">
          Explode Factor:
        </label>
        <input
          id="explode"
          type="range"
          defaultValue={0}
          className="mb-1.5 h-5 w-[168px] shrink-0 appearance-none bg-[linear-gradient(#8a888b,#8a888b)] bg-[length:100%_2px] bg-center bg-no-repeat [&::-webkit-slider-thumb]:h-4 [&::-webkit-slider-thumb]:w-1.5 [&::-webkit-slider-thumb]:appearance-none [&::-webkit-slider-thumb]:border-r-2 [&::-webkit-slider-thumb]:border-[#8a888b] [&::-webkit-slider-thumb]:bg-[#fbfafc]"
        />
        <span className="w-[17px]" />
        <Combo w="w-[170px]" value="Assembly Center" dim name="Explode origin" pad="pl-0.5 pt-0.5" />
        <span className="w-2" />
        <Sep w="w-[7px]" />
        <Grip w="w-3" />
        <Btn w="w-[134px]" label="Edge Coloring" icon={I.edgeColor} />
        <Arrow w="w-[25px]" />
        {["0", "1", "2", "3", "X"].map((t) => (
          <React.Fragment key={t}>
            <Btn w="w-[22px]" name={`Edge ${t}`} icon={edgeIcon(t)} />
            <Arrow w="w-[25px]" dim />
          </React.Fragment>
        ))}
        <Btn w="w-8" name="Direction" icon={I.pinArrow} />
        <Btn w="w-[37px]" name="Edge spacing" icon={I.parallel} />
        <Btn w="w-[90px]" label="Thicken" icon={I.thicken} />
      </Bar>
      <div className="flex h-[31px] items-center bg-[#f0eef1] text-[15px]">
        <Combo w="w-[108px]" value="(Auto Scale)" name="Result scale" pad="pl-0" />
        <span className="w-[9px]" />
        <Btn w="w-[25px]" name="Geometry display" icon={I.grayCube} />
        <Arrow w="w-[22px]" />
        <Btn w="w-[25px]" name="Contours" icon={I.legend} />
        <Arrow w="w-[23px]" />
        <Btn w="w-[25px]" name="Edges" icon={spectrumCube} />
        <Arrow w="w-[22px]" />
        <Btn w="w-[34px]" name="Capped surface" icon={I.ghost} />
        <Btn w="w-[34px]" name="Vectors" icon={I.flows} />
        <Sep w="w-2.5" />
        <Btn w="w-[33px]" name="Maximum" icon={tag("MAX")} />
        <Btn w="w-[34px]" name="Minimum" icon={tag("MIN")} />
        <Sep w="w-2.5" />
        <Btn w="w-[83px]" label="Probe" icon={tag("123", "#b0aeb1")} dim />
        <Sep w="w-2.5" />
        <span className="w-[67px] text-[14px] text-[#1c1c1c]">Display</span>
        <Combo w="w-[141px]" value="Scoped Bodies" name="Display" pad="pl-0.5 pt-0.5" />
      </div>
    </header>
  );
}

function StatusBar() {
  const cell = "flex items-center border-t border-l border-[#a09ea1] whitespace-nowrap";
  return (
    <footer className="mt-[7px] flex h-[30px] shrink-0 gap-1 bg-[#f0eef1] text-[16px] leading-6 text-[#1c1c1c]">
      <div className={`w-[560px] border-l-0 ${cell}`} />
      <div className={`w-[330px] ${cell}`} />
      <div className={`w-[278px] gap-1 pl-0.5 ${cell}`}>
        <svg viewBox="0 0 20 22" className="h-[22px] w-5">
          <path d="M1 6H19V17H9L6 21V17H1Z" fill="#ecd94a" stroke="#9c8a1e" />
          <text x="8" y="13" fontSize="16" fill="#222" fontFamily="Noto Sans">0</text>
        </svg>
        No Messages
      </div>
      <div className={`flex-1 pl-0.5 ${cell}`}>No Selection</div>
      <div className={`w-[510px] gap-5 pl-0.5 ${cell}`}>
        <span>Metric (mm, t, N, s, mV, mA)</span>
        <span>Degrees</span>
        <span>rad/s</span>
        <span>Celsius</span>
      </div>
    </footer>
  );
}

function TaskButton({ name, w, bg, line, children }: { name: string; w: string; bg?: string; line?: string; children: ReactNode }) {
  return (
    <button aria-label={name} className={`flex h-full shrink-0 flex-col items-center justify-between ${w} ${bg ?? ""}`}>
      <span className="h-[3px]" />
      <svg viewBox="0 0 32 32" className="h-8 w-8" fill="none">
        {children}
      </svg>
      <span className={`h-[3px] ${line ?? "w-0"}`} />
    </button>
  );
}

function Taskbar() {
  return (
    <footer className="flex h-[50px] shrink-0 overflow-hidden bg-[#231f22]">
      <input
        aria-label="Search"
        placeholder="这里输入你要搜索的内容"
        className="w-[362px] shrink-0 border-t border-[#b5b3b6] bg-[#f2f1f2] text-[19px] outline-none placeholder:text-[#2c2c2c]"
      />
      <TaskButton name="Cortana" w="w-[60px]">
        <circle cx="16" cy="16" r="8.5" stroke="#fff" strokeWidth="2.6" />
      </TaskButton>
      <TaskButton name="Task view" w="w-[59px]">
        <path d="M7 6V10H19V6M7 26V22H19V26M7 13H19V19H7ZM24 5V12M24 19V27" stroke="#eee" strokeWidth="1.5" />
        <path d="M22.500 13H25.500V16H22.500Z" fill="#eee" />
      </TaskButton>
      <TaskButton name="Workbench" w="w-[70px]" line="w-[51px] bg-[#84b6dc]">
        <path d="M2 1H12L15 9L9 30H2L7 13Z" fill="#f6cf2c" />
        <path d="M17 1H30V30H26Z" fill="#f8dc5c" />
        <path d="M2 1H12L9 8L7 13Z" fill="#e0a50c" />
        <path d="M15 13L22 30H10Z" fill="#f3c01c" />
        <path d="M17 1L30 30L26 30L15 5Z" fill="#e9b214" />
      </TaskButton>
      <TaskButton name="File explorer" w="w-[59px]" line="w-[51px] bg-[#84b6dc]">
        <path d="M2 5H12L14 8H30V27H2Z" fill="#f2cf63" />
        <path d="M2 11H30V16H2Z" fill="#fbe08c" />
        <path d="M7 16H25V29H20V22H12V29H7Z" fill="#3d9bbd" />
      </TaskButton>
      <TaskButton name="Recorder" w="w-[61px]" bg="bg-[#a85c2a]" line="w-full bg-[#e8701a]">
        <circle cx="16" cy="15" r="13" fill="#141216" stroke="#e8e4e4" strokeWidth="1.5" />
        <circle cx="12" cy="9" r="5" fill="#55535a" />
        <circle cx="9" cy="19" r="5" fill="#6e6c73" />
        <circle cx="20" cy="14" r="5" fill="#55535a" />
        <circle cx="16" cy="15" r="3.5" fill="#141216" />
        <circle cx="24" cy="24" r="7" fill="#e8090c" />
      </TaskButton>
      <TaskButton name="Office" w="w-16" line="w-[51px] bg-[#84b6dc]">
        <path d="M2 4H10L12 22L18 4H31L30 10H22L15 27H8Z" fill="#c9201f" />
        <path d="M22 4H31L21 22Z" fill="#ea4a3c" />
        <rect x="18" y="18" width="12" height="12" rx="2" fill="#e46a86" />
        <path d="M21 21H27V24H22V28" stroke="#fff" strokeWidth="1.5" />
      </TaskButton>
      <TaskButton name="Mechanical" w="w-[60px]" bg="bg-[#4b494c]" line="w-full bg-[#84b6dc]">
        <circle cx="16" cy="16" r="14.5" fill="#c00d14" />
        <ellipse cx="16" cy="8" rx="10" ry="6" fill="#dc5056" />
        <path d="M8 23V10L16 19L24 10V23" stroke="#fff" strokeWidth="3.6" />
      </TaskButton>
      <span className="flex-1" />
      <div className="flex shrink-0 items-center text-white">
        <svg viewBox="0 0 110 50" className="h-[50px] w-[110px]" fill="none" stroke="#f2f2f2" strokeWidth="1.5">
          <path d="M2 30L10 21L18 30" />
          <rect x="35" y="15" width="8" height="15" rx="2" fill="#f2f2f2" />
          <path d="M33 24V28Q33 31 39 31T45 28V24M39 31V34M35 34.500H43" />
          <path d="M64 17H79V30H62M71 30V33M66 33.500H76M60 17H64V22H60ZM62 22V33" />
          <path d="M90 22H93L97 18V32L93 28H90ZM100 22Q102 25 100 29" strokeWidth="1.2" />
          <path d="M103 20Q106 25 103 31M106 17Q110 25 106 34" stroke="#99979a" strokeWidth="1.2" />
        </svg>
        <span className="w-[37px] text-center text-[18px]">中</span>
        <span className="mx-[9px] flex h-5 w-5 items-center justify-center bg-white text-[15px] leading-5 text-[#231f22]">拼</span>
        <div className="ml-3 w-[22px] overflow-hidden text-[14px] leading-6 whitespace-nowrap">
          <p className="pl-[17px]">1</p>
          <p>202</p>
        </div>
      </div>
    </footer>
  );
}

export default function App() {
  return (
    <div className="flex h-screen flex-col overflow-hidden bg-[#fafafb] font-['Noto_Sans','Noto_Sans_CJK_SC',sans-serif]">
      <Toolbars />
      <main className="flex min-h-0 flex-1">
        <aside className="flex w-[477px] shrink-0 flex-col gap-[7px]">
          <Outline />
          <Details />
        </aside>
        <div className="ml-[7px] flex min-w-0 flex-1 flex-col">
          <Viewport />
          <Tabs />
          <Messages />
          <div className="mt-2 grid h-[333px] shrink-0 grid-cols-[1141fr_672fr] gap-[7px]">
            <Graph />
            <Tabular />
          </div>
        </div>
      </main>
      <StatusBar />
      <Taskbar />
    </div>
  );
}
